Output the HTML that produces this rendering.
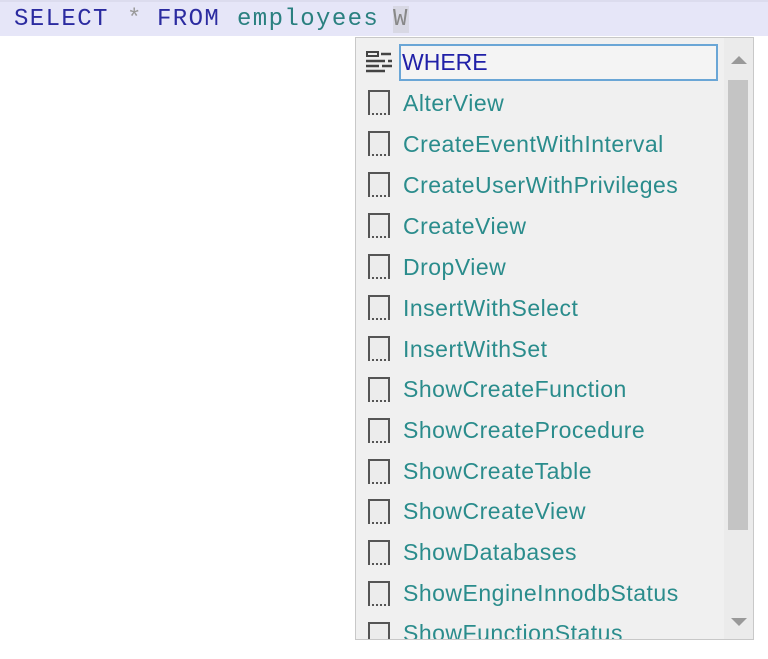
<!DOCTYPE html><html><head><style>
body{margin:0;width:768px;height:659px;background:#fff;overflow:hidden;position:relative;font-family:"Liberation Sans",sans-serif}
.bar{position:absolute;left:0;top:0;width:768px;height:36px;background:#e6e6f8;border-top:2px solid #dcdcee;box-sizing:border-box}
.c{position:absolute;top:4px;font-family:"Liberation Mono",monospace;font-size:24px;letter-spacing:1.4px;white-space:pre}
.pop{position:absolute;left:355px;top:37px;width:399px;height:603px;background:#f0f0f0;border:1px solid #c8c8c8;box-sizing:border-box;overflow:hidden}
.row{position:absolute;left:47px;font-size:23px;color:#2a8c8c;letter-spacing:0.5px;white-space:nowrap}
.ic{position:absolute;left:12px;width:22px;height:25px;border:2px solid #555;border-bottom:2px dotted #555;box-sizing:border-box;background:#ececec}
.sel{position:absolute;left:43px;top:6px;width:319px;height:37px;border:2px solid #6aa6d6;box-sizing:border-box;background:#f4f4f4}
.sb{position:absolute;left:368px;top:0;width:30px;height:601px;background:#ebebeb}
.thumb{position:absolute;left:372px;top:42px;width:20px;height:450px;background:#c4c4c4}
</style></head><body>
<div class="bar">
<span class="c" style="left:14px;color:#2b2ba0">SELECT</span>
<span class="c" style="left:127px;color:#999">*</span>
<span class="c" style="left:157px;color:#2b2ba0">FROM</span>
<span class="c" style="left:237px;color:#2a8080">employees</span>
<span class="c" style="left:393px;color:#888;background:#d8d8e4">W</span>
</div>
<div class="pop">
<div class="sb"></div><div class="thumb"></div>
<div style="position:absolute;left:375px;top:18px;width:0;height:0;border-left:8px solid transparent;border-right:8px solid transparent;border-bottom:8px solid #999"></div>
<div style="position:absolute;left:375px;top:580px;width:0;height:0;border-left:8px solid transparent;border-right:8px solid transparent;border-top:8px solid #999"></div>
<div class="sel"></div>
<svg style="position:absolute;left:9px;top:12px" width="30" height="24"><g stroke="#444" stroke-width="2.5"><rect x="2" y="2" width="11" height="4" fill="none" stroke-width="2"/><line x1="16" y1="4" x2="26" y2="4"/><line x1="1" y1="11" x2="20" y2="11"/><line x1="23" y1="11" x2="27" y2="11"/><line x1="1" y1="16" x2="14" y2="16"/><line x1="17" y1="16" x2="27" y2="16"/><line x1="1" y1="21" x2="20" y2="21"/></g></svg>
<div class="row" style="top:11px;color:#2020a8;left:46px;letter-spacing:0">WHERE</div>
<div class="ic" style="top:52px"></div><div class="row" style="top:52px">AlterView</div>
<div class="ic" style="top:93px"></div><div class="row" style="top:93px">CreateEventWithInterval</div>
<div class="ic" style="top:134px"></div><div class="row" style="top:134px">CreateUserWithPrivileges</div>
<div class="ic" style="top:175px"></div><div class="row" style="top:175px">CreateView</div>
<div class="ic" style="top:216px"></div><div class="row" style="top:216px">DropView</div>
<div class="ic" style="top:257px"></div><div class="row" style="top:257px">InsertWithSelect</div>
<div class="ic" style="top:298px"></div><div class="row" style="top:298px">InsertWithSet</div>
<div class="ic" style="top:339px"></div><div class="row" style="top:338px">ShowCreateFunction</div>
<div class="ic" style="top:380px"></div><div class="row" style="top:379px">ShowCreateProcedure</div>
<div class="ic" style="top:421px"></div><div class="row" style="top:420px">ShowCreateTable</div>
<div class="ic" style="top:461px"></div><div class="row" style="top:460px">ShowCreateView</div>
<div class="ic" style="top:502px"></div><div class="row" style="top:501px">ShowDatabases</div>
<div class="ic" style="top:543px"></div><div class="row" style="top:542px">ShowEngineInnodbStatus</div>
<div class="ic" style="top:584px"></div><div class="row" style="top:582px">ShowFunctionStatus</div>
</div>
</body></html>
